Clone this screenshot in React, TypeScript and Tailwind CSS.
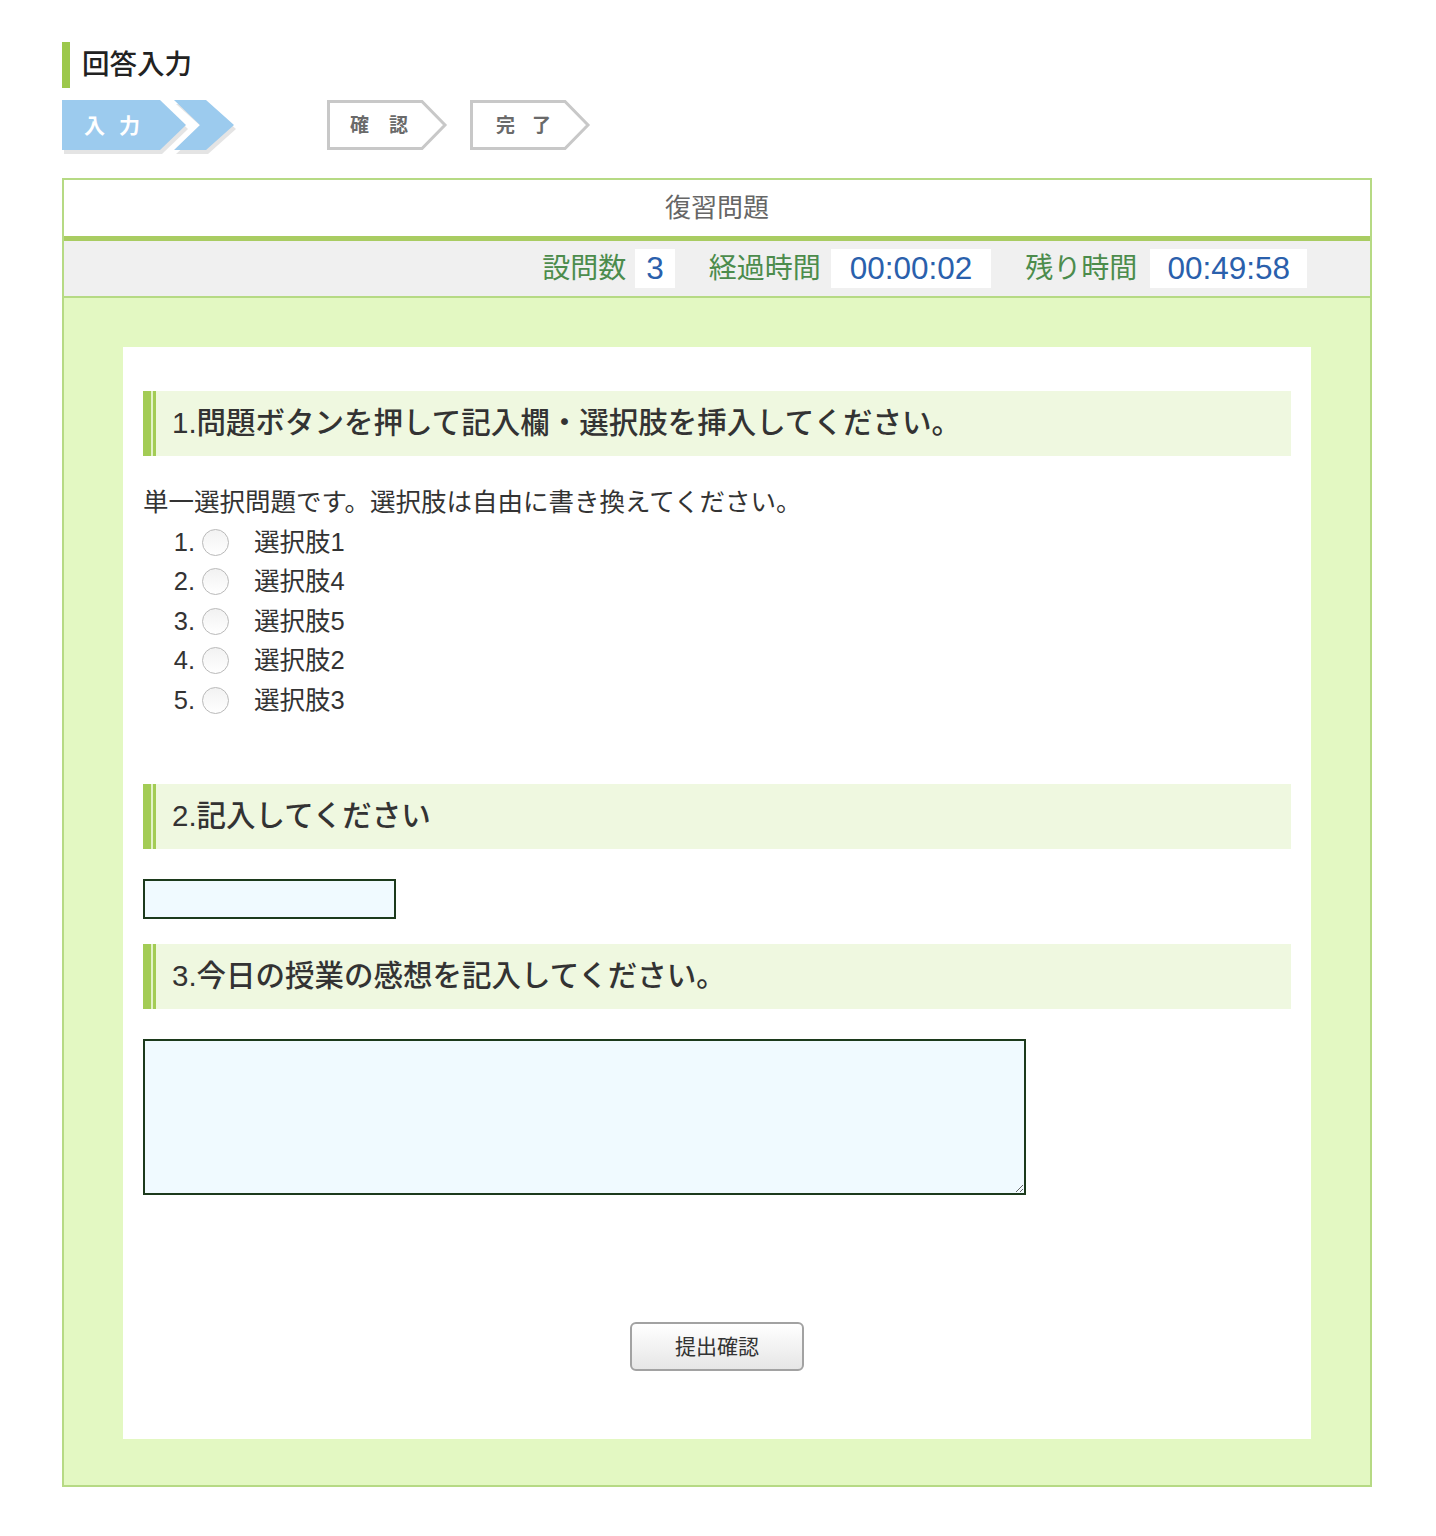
import React from "react";

const options = ["選択肢1", "選択肢4", "選択肢5", "選択肢2", "選択肢3"];

function Heading({ text }: { text: string }) {
  return (
    <div className="flex h-[65px] items-stretch bg-[#eff8e0]">
      <div className="w-[8px] bg-[#a3cc55]" />
      <div className="w-[2px] bg-[#e2f2c8]" />
      <div className="w-[3px] bg-[#a3cc55]" />
      <div className="flex items-center pl-[16px] text-[29.5px] font-medium text-[#333]">{text}</div>
    </div>
  );
}

function Steps() {
  return (
    <svg width="540" height="56" viewBox="0 0 540 56" className="block">
      {/* shadow */}
      <polygon points="2,4 100,4 126,29 100,54 2,54" fill="#e4e4e4" />
      <polygon points="114,4 146,4 174,29 146,54 114,54 142,29" fill="#e4e4e4" />
      <polygon points="0,0 98,0 124,25 98,50 0,50" fill="#9ccbee" />
      <polygon points="112,0 144,0 172,25 144,50 112,50 138,25" fill="#9ccbee" />
      <text x="22" y="33" fontSize="21" fontWeight="bold" fill="#fff" fontFamily="Noto Sans CJK JP, sans-serif">入</text>
      <text x="57" y="33" fontSize="21" fontWeight="bold" fill="#fff" fontFamily="Noto Sans CJK JP, sans-serif">力</text>

      <polygon points="266.5,1.5 360,1.5 383,25 360,48.5 266.5,48.5" fill="#fff" stroke="#c8c8c8" strokeWidth="3" />
      <text x="288" y="32" fontSize="19" fontWeight="bold" fill="#6a6a6a" fontFamily="Noto Sans CJK JP, sans-serif">確</text>
      <text x="327" y="32" fontSize="19" fontWeight="bold" fill="#6a6a6a" fontFamily="Noto Sans CJK JP, sans-serif">認</text>

      <polygon points="409.5,1.5 503,1.5 526,25 503,48.5 409.5,48.5" fill="#fff" stroke="#c8c8c8" strokeWidth="3" />
      <text x="434" y="32" fontSize="19" fontWeight="bold" fill="#6a6a6a" fontFamily="Noto Sans CJK JP, sans-serif">完</text>
      <text x="470" y="32" fontSize="19" fontWeight="bold" fill="#6a6a6a" fontFamily="Noto Sans CJK JP, sans-serif">了</text>
    </svg>
  );
}

export default function App() {
  return (
    <div className="min-h-[1536px] bg-white px-[62px] pt-[42px] font-['Liberation_Sans','Noto_Sans_CJK_JP',sans-serif] text-[#333]">
      {/* Title */}
      <div className="flex items-center gap-[12px]">
        <div className="h-[46px] w-[8px] bg-[#9cc84b]" />
        <h1 className="text-[27.5px] font-medium text-[#222]">回答入力</h1>
      </div>

      {/* Steps */}
      <div className="mt-[12px]">
        <Steps />
      </div>

      {/* Main box */}
      <div className="mt-[22px] w-[1310px] border-2 border-[#b6da84]">
        <div className="flex h-[56px] items-center justify-center bg-white text-[26px] text-[#666]">復習問題</div>
        <div className="h-[5px] bg-[#a9cc62]" />
        <div className="flex h-[57px] items-center justify-end gap-[34px] border-b-2 border-[#b6da84] bg-[#f0f0f0] pr-[63px]">
          <div className="flex items-center gap-[9px]">
            <span className="text-[28px] text-[#4c8c4c]">設問数</span>
            <span className="flex h-[39px] items-center bg-white px-[11px] text-[31.5px] text-[#2a60ac]">3</span>
          </div>
          <div className="flex items-center gap-[10px]">
            <span className="text-[28px] text-[#4c8c4c]">経過時間</span>
            <span className="flex h-[39px] items-center bg-white px-[19px] text-[31.5px] text-[#2a60ac]">00:00:02</span>
          </div>
          <div className="flex items-center gap-[13px]">
            <span className="text-[28px] text-[#4c8c4c]">残り時間</span>
            <span className="flex h-[39px] items-center bg-white px-[17px] text-[31.5px] text-[#2a60ac]">00:49:58</span>
          </div>
        </div>

        <div className="bg-[#e3f8c2] px-[59px] pb-[46px] pt-[49px]">
          <div className="bg-white px-[20px] pb-[68px] pt-[44px]">
            <Heading text="1.問題ボタンを押して記入欄・選択肢を挿入してください。" />
            <div className="mt-[27px] text-[25.5px] leading-[39.5px] text-[#333]">
              <p>単一選択問題です。選択肢は自由に書き換えてください。</p>
              {options.map((o, i) => (
                <div key={o} className="flex items-center pl-[24px]">
                  <span className="w-[28px] text-right">{i + 1}.</span>
                  <span className="ml-[7px] h-[27px] w-[27px] rounded-full border border-[#b9b9b9] bg-linear-to-b from-[#f2f2f2] to-white" />
                  <span className="ml-[25px]">{o}</span>
                </div>
              ))}
            </div>

            <div className="mt-[64px]">
              <Heading text="2.記入してください" />
            </div>
            <input
              type="text"
              className="mt-[30px] block h-[40px] w-[253px] border-2 border-[#1c3a1c] bg-[#f0faff] outline-none"
            />

            <div className="mt-[25px]">
              <Heading text="3.今日の授業の感想を記入してください。" />
            </div>
            <textarea className="mt-[30px] block h-[156px] w-[883px] border-2 border-[#1c3a1c] bg-[#f0faff] outline-none" />

            <div className="mt-[127px] flex justify-center">
              <button className="h-[49px] w-[174px] rounded-[6px] border-2 border-[#a2a2a2] bg-linear-to-b from-white to-[#e6e6e6] text-[21px] text-[#333]">
                提出確認
              </button>
            </div>
          </div>
        </div>
      </div>
    </div>
  );
}
